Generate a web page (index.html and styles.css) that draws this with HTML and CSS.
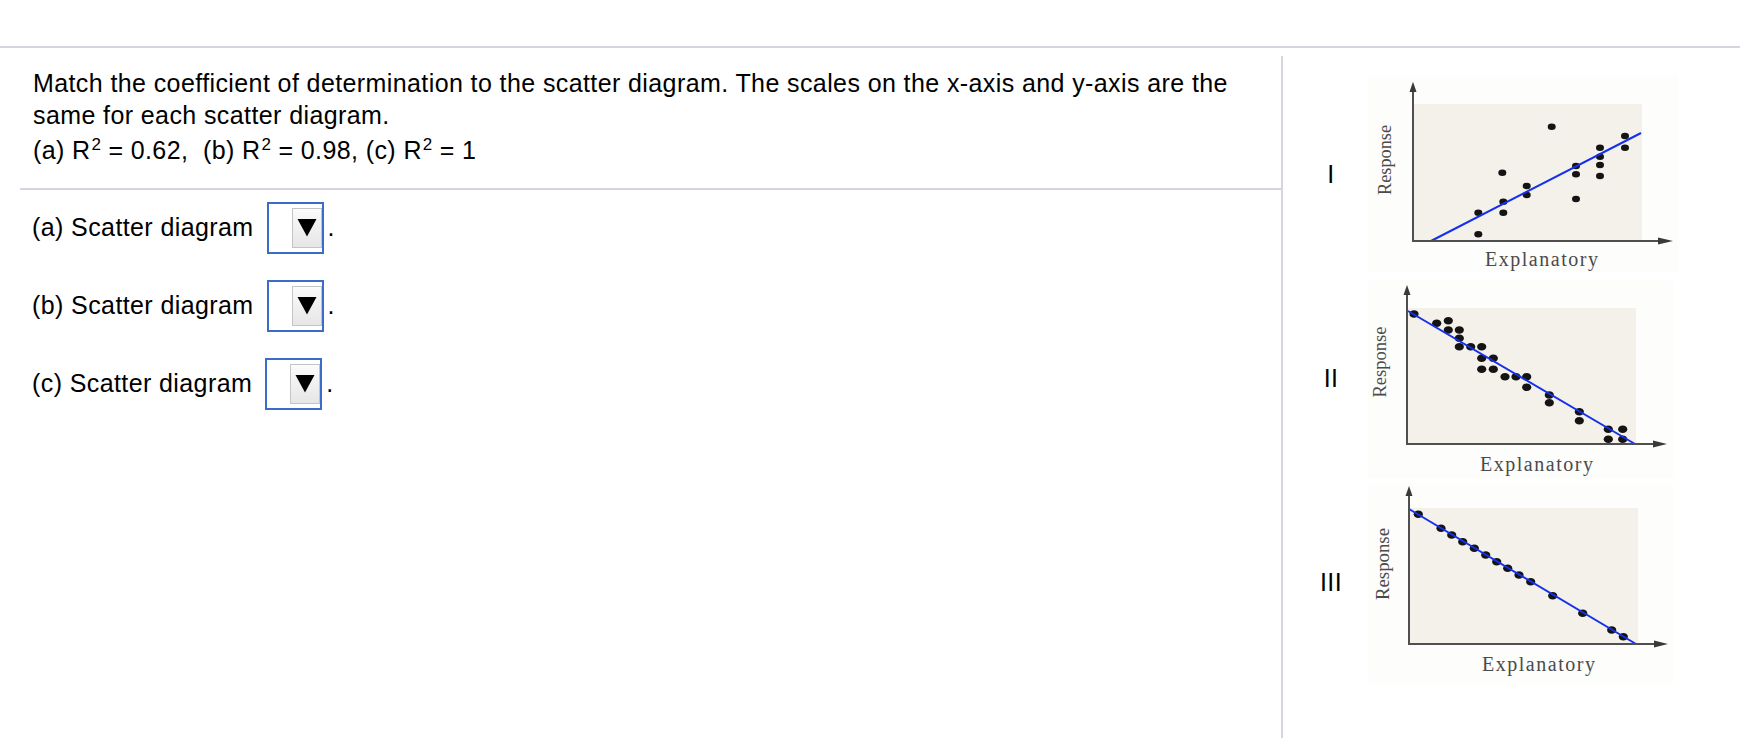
FILE: index.html
```html
<!DOCTYPE html>
<html lang="en">
<head>
<meta charset="utf-8">
<title>Coefficient of determination</title>
<link rel="stylesheet" href="styles.css">
</head>
<body>
<div class="topbar"></div>
<main class="layout">
  <section class="left">
    <div class="question">
      <p class="prompt">Match the coefficient of determination to the scatter diagram. The scales on the x-axis and y-axis are the same for each scatter diagram.</p>
      <p class="values">(a) R<sup>2</sup> = 0.62,&nbsp; (b) R<sup>2</sup> = 0.98, (c) R<sup>2</sup> = 1</p>
    </div>
    <div class="answers">
      <div class="row">
        <span class="label">(a) Scatter diagram</span>
        <span class="select"><span class="btn"><svg class="tri" width="20" height="18" viewBox="0 0 20 18"><polygon points="0.5,0 19.5,0 10,17.5"/></svg></span></span>
        <span class="period">.</span>
      </div>
      <div class="row">
        <span class="label">(b) Scatter diagram</span>
        <span class="select"><span class="btn"><svg class="tri" width="20" height="18" viewBox="0 0 20 18"><polygon points="0.5,0 19.5,0 10,17.5"/></svg></span></span>
        <span class="period">.</span>
      </div>
      <div class="row">
        <span class="label">(c) Scatter diagram</span>
        <span class="select"><span class="btn"><svg class="tri" width="20" height="18" viewBox="0 0 20 18"><polygon points="0.5,0 19.5,0 10,17.5"/></svg></span></span>
        <span class="period">.</span>
      </div>
    </div>
  </section>

  <aside class="right">
    <div class="fig">
      <span class="num">I</span>
      <svg class="chart" width="310" height="200" viewBox="0 0 310 200">
        <rect class="bg" x="0" y="0" width="310" height="197"/>
        <rect class="panel" x="45" y="29" width="229" height="137"/>
        <g class="dots">
          <ellipse cx="110.3" cy="159.3" rx="4" ry="3.2"/>
          <ellipse cx="110.3" cy="137.7" rx="4" ry="3.2"/>
          <ellipse cx="135.3" cy="137.7" rx="4" ry="3.2"/>
          <ellipse cx="135.3" cy="126.7" rx="4" ry="3.2"/>
          <ellipse cx="134.3" cy="97.7" rx="4" ry="3.2"/>
          <ellipse cx="158.7" cy="111" rx="4" ry="3.2"/>
          <ellipse cx="158.7" cy="120" rx="4" ry="3.2"/>
          <ellipse cx="183.7" cy="51.7" rx="4" ry="3.2"/>
          <ellipse cx="208" cy="91" rx="4" ry="3.2"/>
          <ellipse cx="208" cy="99.3" rx="4" ry="3.2"/>
          <ellipse cx="208" cy="124" rx="4" ry="3.2"/>
          <ellipse cx="232" cy="72.7" rx="4" ry="3.2"/>
          <ellipse cx="232" cy="81.7" rx="4" ry="3.2"/>
          <ellipse cx="232" cy="90" rx="4" ry="3.2"/>
          <ellipse cx="232" cy="101" rx="4" ry="3.2"/>
          <ellipse cx="257" cy="61" rx="4" ry="3.2"/>
          <ellipse cx="257" cy="72.7" rx="4" ry="3.2"/>
        </g>
        <line class="fit" x1="63" y1="166" x2="273" y2="58"/>
        <line class="axis" x1="45" y1="14" x2="45" y2="167"/>
        <line class="axis" x1="44" y1="166" x2="292" y2="166"/>
        <polygon class="arrow" points="45,6.7 41.5,17 48.5,17"/>
        <polygon class="arrow" points="305,166 290,162.5 290,169.5"/>
        <text class="ylab" x="0" y="0" transform="translate(22.6,85) rotate(-90)" textLength="70" lengthAdjust="spacingAndGlyphs">Response</text>
        <text class="xlab" x="117" y="191" textLength="113" lengthAdjust="spacing">Explanatory</text>
      </svg>
    </div>

    <div class="fig">
      <span class="num">II</span>
      <svg class="chart" width="310" height="200" viewBox="0 0 310 200">
        <g transform="translate(0,1)">
          <rect class="bg" x="0" y="0" width="305" height="198"/>
          <rect class="panel" x="39" y="28" width="229" height="136"/>
          <g class="dots big">
            <ellipse cx="46" cy="34" rx="4.6" ry="3.8"/>
            <ellipse cx="68.7" cy="43.3" rx="4.6" ry="3.8"/>
            <ellipse cx="80.3" cy="40.7" rx="4.6" ry="3.8"/>
            <ellipse cx="80.3" cy="50" rx="4.6" ry="3.8"/>
            <ellipse cx="91.3" cy="50" rx="4.6" ry="3.8"/>
            <ellipse cx="91.3" cy="58.3" rx="4.6" ry="3.8"/>
            <ellipse cx="91.3" cy="66.7" rx="4.6" ry="3.8"/>
            <ellipse cx="102.7" cy="66.7" rx="4.6" ry="3.8"/>
            <ellipse cx="113.7" cy="66.7" rx="4.6" ry="3.8"/>
            <ellipse cx="113.7" cy="78.3" rx="4.6" ry="3.8"/>
            <ellipse cx="113.7" cy="89.3" rx="4.6" ry="3.8"/>
            <ellipse cx="125.3" cy="78.3" rx="4.6" ry="3.8"/>
            <ellipse cx="125.3" cy="89.3" rx="4.6" ry="3.8"/>
            <ellipse cx="137" cy="96.7" rx="4.6" ry="3.8"/>
            <ellipse cx="148" cy="96.7" rx="4.6" ry="3.8"/>
            <ellipse cx="158.7" cy="96.7" rx="4.6" ry="3.8"/>
            <ellipse cx="158.7" cy="107.3" rx="4.6" ry="3.8"/>
            <ellipse cx="181.3" cy="115" rx="4.6" ry="3.8"/>
            <ellipse cx="181.3" cy="122.7" rx="4.6" ry="3.8"/>
            <ellipse cx="211.3" cy="131.7" rx="4.6" ry="3.8"/>
            <ellipse cx="211.3" cy="140.7" rx="4.6" ry="3.8"/>
            <ellipse cx="240.3" cy="149.3" rx="4.6" ry="3.8"/>
            <ellipse cx="240.3" cy="159.3" rx="4.6" ry="3.8"/>
            <ellipse cx="254.7" cy="149.3" rx="4.6" ry="3.8"/>
            <ellipse cx="254.7" cy="159.3" rx="4.6" ry="3.8"/>
          </g>
          <line class="fit" x1="40" y1="31" x2="267" y2="164"/>
          <line class="axis" x1="39" y1="12" x2="39" y2="165"/>
          <line class="axis" x1="38" y1="164" x2="286" y2="164"/>
          <polygon class="arrow" points="39,5 35.5,15 42.5,15"/>
          <polygon class="arrow" points="299,164 285,160.5 285,167.5"/>
          <text class="ylab" x="0" y="0" transform="translate(18,82) rotate(-90)" textLength="71" lengthAdjust="spacingAndGlyphs">Response</text>
          <text class="xlab" x="112" y="190.5" textLength="113" lengthAdjust="spacing">Explanatory</text>
        </g>
      </svg>
    </div>

    <div class="fig">
      <span class="num">III</span>
      <svg class="chart" width="310" height="200" viewBox="0 0 310 200">
        <rect class="bg" x="0" y="0" width="305" height="200"/>
        <rect class="panel" x="41" y="25" width="229" height="136"/>
        <g class="dots big">
          <ellipse cx="50.3" cy="31.3" rx="4.6" ry="3.8"/>
          <ellipse cx="73" cy="45.3" rx="4.6" ry="3.8"/>
          <ellipse cx="83.7" cy="52" rx="4.6" ry="3.8"/>
          <ellipse cx="94.7" cy="58.7" rx="4.6" ry="3.8"/>
          <ellipse cx="106.3" cy="65.3" rx="4.6" ry="3.8"/>
          <ellipse cx="117.7" cy="72" rx="4.6" ry="3.8"/>
          <ellipse cx="128.7" cy="78.7" rx="4.6" ry="3.8"/>
          <ellipse cx="139.7" cy="85.3" rx="4.6" ry="3.8"/>
          <ellipse cx="151" cy="92" rx="4.6" ry="3.8"/>
          <ellipse cx="162.7" cy="98.7" rx="4.6" ry="3.8"/>
          <ellipse cx="184.7" cy="112.7" rx="4.6" ry="3.8"/>
          <ellipse cx="214.7" cy="130.3" rx="4.6" ry="3.8"/>
          <ellipse cx="243.7" cy="147" rx="4.6" ry="3.8"/>
          <ellipse cx="255.3" cy="153.7" rx="4.6" ry="3.8"/>
        </g>
        <line class="fit" x1="41" y1="26" x2="268" y2="161"/>
        <line class="axis" x1="41" y1="10" x2="41" y2="162"/>
        <line class="axis" x1="40" y1="161" x2="288" y2="161"/>
        <polygon class="arrow" points="41,3 37.5,13 44.5,13"/>
        <polygon class="arrow" points="300,161 286,157.5 286,164.5"/>
        <text class="ylab" x="0" y="0" transform="translate(21.3,81) rotate(-90)" textLength="72" lengthAdjust="spacingAndGlyphs">Response</text>
        <text class="xlab" x="114" y="187.7" textLength="113" lengthAdjust="spacing">Explanatory</text>
      </svg>
    </div>
  </aside>
</main>
</body>
</html>
```

FILE: styles.css
```css
html, body {
  margin: 0;
  padding: 0;
  background: #ffffff;
}

body {
  font-family: "Liberation Sans", Arial, Helvetica, sans-serif;
  color: #000;
  font-size: 25px;
  letter-spacing: 0.4px;
}

.topbar {
  height: 46px;
  border-bottom: 2px solid #d3d6df;
}

.layout {
  display: flex;
  padding-top: 8px;
  min-height: 682px;
}

.left {
  width: 1281px;
  flex: none;
}

.question {
  margin-left: 20px;
  padding: 11px 0 23px 13px;
  border-bottom: 2px solid #d3d6df;
}

.prompt {
  margin: 0;
  line-height: 32px;
}

.values {
  margin: 4px 0 0;
  line-height: 30px;
}

.values sup {
  font-size: 17px;
  line-height: 0;
  vertical-align: 9px;
  letter-spacing: 0;
  margin-left: 1px;
}

.answers {
  padding-top: 12px;
  display: flex;
  flex-direction: column;
  gap: 26px;
}

.row {
  display: flex;
  align-items: center;
  height: 52px;
  padding-left: 32px;
}

.label {
  line-height: 30px;
  padding-bottom: 3px;
  white-space: nowrap;
}

.select {
  margin-left: 13px;
  width: 57px;
  height: 52px;
  box-sizing: border-box;
  border: 2px solid #3a6ccc;
  background: #fff;
  display: flex;
  align-items: center;
  justify-content: flex-end;
}

.btn {
  width: 30px;
  height: 40px;
  box-sizing: border-box;
  border: 1px solid #c4c4c4;
  background: linear-gradient(#fbfbfb, #e6e6e6);
  display: flex;
  align-items: center;
  justify-content: center;
}

.tri polygon {
  fill: #000;
}

.period {
  margin-left: 4px;
  line-height: 30px;
  padding-bottom: 3px;
}

.right {
  flex: 1;
  border-left: 2px solid #d3d6df;
  padding-top: 19px;
  display: flex;
  flex-direction: column;
  gap: 4px;
}

.fig {
  display: flex;
  align-items: center;
  height: 200px;
}

.num {
  width: 85px;
  box-sizing: border-box;
  padding-left: 11px;
  text-align: center;
  line-height: 30px;
  padding-bottom: 3px;
}

.chart {
  display: block;
  flex: none;
}

.chart .bg {
  fill: #fdfdfc;
}

.chart .panel {
  fill: #f4f1ea;
}

.chart .dots ellipse {
  fill: #141414;
}

.chart .fit {
  stroke: #1430ec;
  stroke-width: 2;
}

.chart .axis {
  stroke: #4f4f4f;
  stroke-width: 2;
}

.chart .arrow {
  fill: #3a3a3a;
}

.chart text {
  font-family: "Liberation Serif", "Times New Roman", serif;
  fill: #4a4a4a;
  letter-spacing: 0;
}

.chart .ylab {
  font-size: 19px;
  text-anchor: middle;
}

.chart .xlab {
  font-size: 20px;
}
```
